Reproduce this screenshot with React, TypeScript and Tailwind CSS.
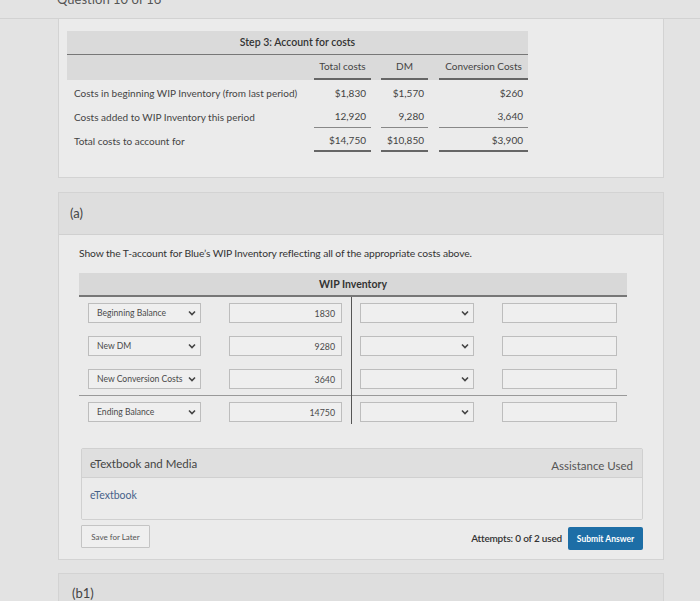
import React from 'react';

const font = { fontFamily: 'Lato, "Open Sans", sans-serif' };

const stepRows = [
  { label: 'Costs in beginning WIP Inventory (from last period)', total: '$1,830', dm: '$1,570', cc: '$260' },
  { label: 'Costs added to WIP Inventory this period', total: '12,920', dm: '9,280', cc: '3,640' },
  { label: 'Total costs to account for', total: '$14,750', dm: '$10,850', cc: '$3,900' },
];

const tRows = [
  { account: 'Beginning Balance', amount: '1830' },
  { account: 'New DM', amount: '9280' },
  { account: 'New Conversion Costs', amount: '3640' },
  { account: 'Ending Balance', amount: '14750' },
];

const Chevron = () => (
  <svg width="8" height="6" viewBox="0 0 8 6" className="shrink-0">
    <path d="M1 1.5 L4 4.5 L7 1.5" fill="none" stroke="#444" strokeWidth="1.6" />
  </svg>
);

const SelectBox = ({ value, width }: { value?: string; width: string }) => (
  <div className={`${width} h-5 flex items-center justify-between gap-1 pl-2 pr-[4px] bg-[#efefef] border border-[#bdbdbd] text-[8.6px] text-[#4a4a4a]`}>
    <span className="whitespace-nowrap">{value}</span>
    <Chevron />
  </div>
);

const InputBox = ({ value, width }: { value?: string; width: string }) => (
  <div className={`${width} h-5 flex items-center justify-end pr-[6px] bg-[#efefef] border border-[#bdbdbd] text-[8.8px] text-[#4a4a4a]`}>
    {value}
  </div>
);

const rowPad = (i: number) =>
  i === 3 ? 'mt-[6px] border-t border-[#999] pt-[6px]' : i === 0 ? 'pt-[6px]' : 'pt-[13px]';

export default function App() {
  return (
    <div className="w-[700px] h-[601px] overflow-hidden bg-[#e3e3e3] text-[#333]" style={font}>
      {/* Top strip */}
      <div className="h-[19px] overflow-hidden border-b border-[#d2d2d2] pl-[57px]">
        <div className="-mt-[10px] text-[13px] text-[#555]">Question 10 of 16</div>
      </div>

      <div className="ml-[58px] w-[606px]">
        {/* Step 3 panel */}
        <div className="h-[159px] bg-[#ebebeb] border border-[#d3d3d3] border-t-0 pt-[12px] pl-[8px]">
          <div className="w-[461px]">
            <div className="bg-[#dadada]">
              <div className="h-[24px] pt-[1px] flex items-center justify-center border-b border-[#777] text-[10.5px] font-semibold text-[#333]">
                Step 3: Account for costs
              </div>
              <div className="h-[25px] flex items-center text-[10px] text-[#444]">
                <div className="w-[247px]" />
                <div className="w-[57px] h-full flex items-center justify-center border-b-2 border-[#666]">Total costs</div>
                <div className="w-[10px]" />
                <div className="w-[47px] h-full flex items-center justify-center border-b-2 border-[#666]">DM</div>
                <div className="w-[11px]" />
                <div className="w-[89px] h-full flex items-center justify-center border-b-2 border-[#666]">Conversion Costs</div>
              </div>
            </div>
            {stepRows.map((r, i) => (
              <div key={r.label} className="h-[24px] pt-[2px] flex items-center text-[10px] text-[#444]">
                <div className="w-[247px] pl-[7px] whitespace-nowrap">{r.label}</div>
                <div className={`w-[57px] h-full flex items-center justify-end pr-[5px] ${i === 1 ? 'border-b border-[#888]' : ''} ${i === 2 ? 'border-b-2 border-[#666]' : ''}`}>{r.total}</div>
                <div className="w-[10px]" />
                <div className={`w-[47px] h-full flex items-center justify-end pr-[4px] ${i === 1 ? 'border-b border-[#888]' : ''} ${i === 2 ? 'border-b-2 border-[#666]' : ''}`}>{r.dm}</div>
                <div className="w-[11px]" />
                <div className={`w-[89px] h-full flex items-center justify-end pr-[5px] ${i === 1 ? 'border-b border-[#888]' : ''} ${i === 2 ? 'border-b-2 border-[#666]' : ''}`}>{r.cc}</div>
              </div>
            ))}
          </div>
        </div>

        {/* Part (a) panel */}
        <div className="mt-[14px] h-[368px] bg-[#ebebeb] border border-[#d3d3d3]">
          <div className="h-[42px] bg-[#dedede] border-b border-[#d0d0d0] flex items-center pl-[11px] text-[13px] text-[#444]">
            (a)
          </div>
          <div className="pl-[20px] pr-[36px]">
            <p className="mt-[11px] text-[10.3px] text-[#333] tracking-[-0.1px]">
              Show the T-account for Blue’s WIP Inventory reflecting all of the appropriate costs above.
            </p>
            <div className="mt-[12px] w-[548px]">
              <div className="h-[24px] bg-[#d8d8d8] border-b-2 border-[#777] flex items-center justify-center text-[10.5px] font-bold text-[#333]">
                WIP Inventory
              </div>
              <div className="flex">
                <div className="w-[273px] border-r border-[#555] pb-[2px]">
                  {tRows.map((r, i) => (
                    <div key={r.account} className={`flex items-center justify-between pl-[9px] pr-[9px] ${rowPad(i)}`}>
                      <SelectBox value={r.account} width="w-[113px]" />
                      <InputBox value={r.amount} width="w-[113px]" />
                    </div>
                  ))}
                </div>
                <div className="w-[275px] pb-[2px]">
                  {tRows.map((r, i) => (
                    <div key={r.account} className={`flex items-center justify-between pl-[8px] pr-[10px] ${rowPad(i)}`}>
                      <SelectBox width="w-[114px]" />
                      <InputBox width="w-[115px]" />
                    </div>
                  ))}
                </div>
              </div>
            </div>

            {/* eTextbook */}
            <div className="mt-[24px] ml-[2px] w-[562px] rounded-[2px] border border-[#d0d0d0] overflow-hidden">
              <div className="h-[29px] bg-[#dfdfdf] border-b border-[#d0d0d0] flex items-center justify-between pl-[8px] pr-[9px]">
                <span className="text-[11.5px] text-[#444]">eTextbook and Media</span>
                <span className="text-[11.5px] text-[#555] mt-[4px]">Assistance Used</span>
              </div>
              <div className="h-[41px] bg-[#ebebeb] flex items-center pl-[8px] pb-[6px] text-[10.5px] text-[#46618a]">
                eTextbook
              </div>
            </div>

            <div className="mt-[5px] ml-[2px] w-[562px] flex items-start justify-between">
              <button className="w-[69px] h-[23px] border border-[#c4c4c4] bg-[#efefef] text-[8px] text-[#555] rounded-[1px]">
                Save for Later
              </button>
              <div className="flex items-center gap-[6px] mt-[2px]">
                <span className="text-[10px] font-semibold text-[#333] tracking-[-0.2px]">Attempts: 0 of 2 used</span>
                <button className="w-[75px] h-[23px] rounded-[2px] bg-[#1d6ea6] text-white text-[8.5px] font-bold">
                  Submit Answer
                </button>
              </div>
            </div>
          </div>
        </div>

        {/* Part (b1) */}
        <div className="mt-[13px] h-[60px] bg-[#dedede] border border-[#d3d3d3] pl-[13px] pt-[10px] text-[13px] text-[#444]">
          (b1)
        </div>
      </div>
    </div>
  );
}
